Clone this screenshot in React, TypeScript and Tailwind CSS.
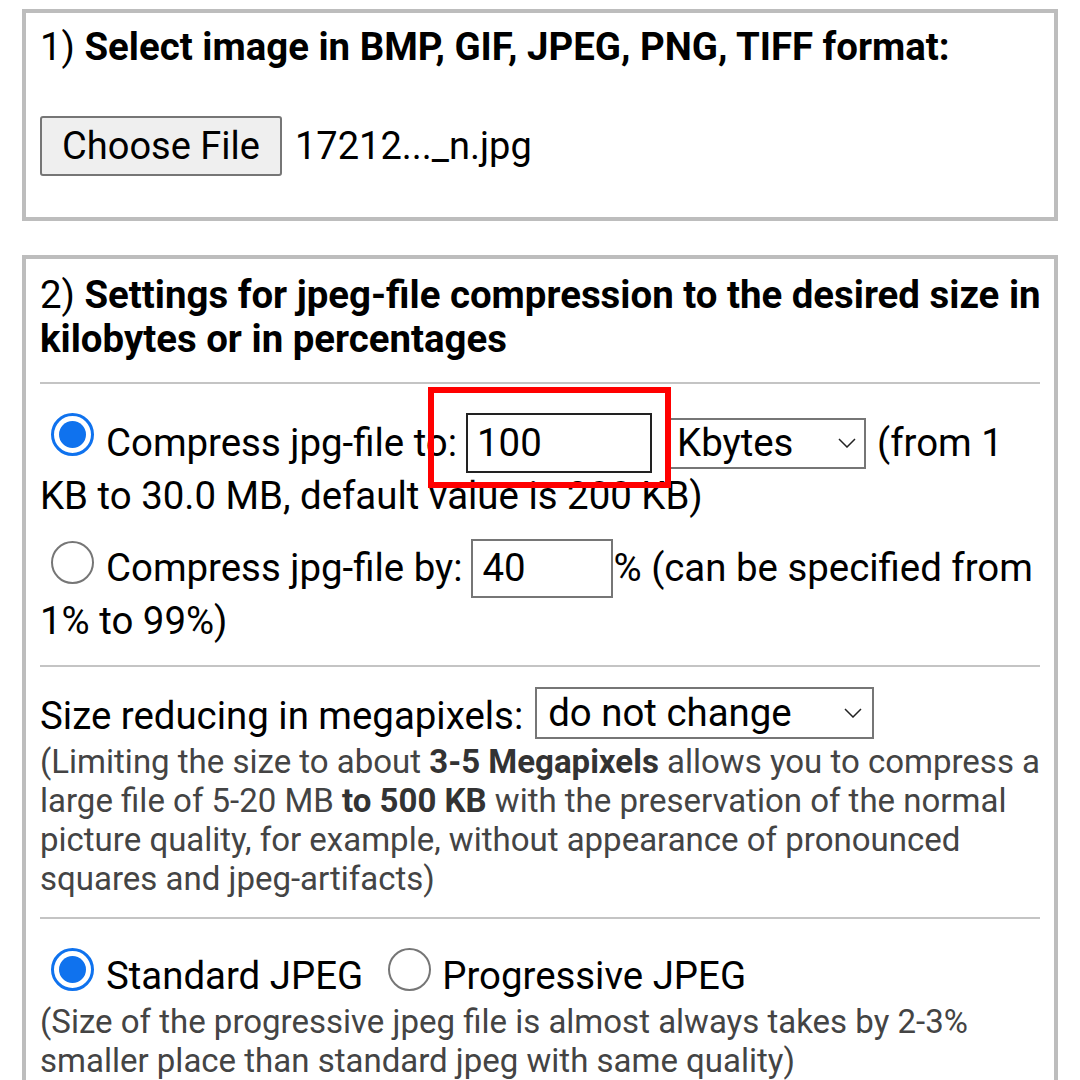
import React from "react";

function Radio({ checked }: { checked?: boolean }) {
    if (checked) {
        return (
            <span className="flex h-[43px] w-[43px] shrink-0 items-center justify-center rounded-full border-[3px] border-[#0f72ee] bg-white">
                <span className="block h-[27px] w-[27px] rounded-full bg-[#0f72ee]" />
            </span>
        );
    }
    return <span className="block h-[43px] w-[43px] shrink-0 rounded-full border-2 border-[#767676] bg-white" />;
}

function Chevron() {
    return (
        <svg width="18" height="10" viewBox="0 0 18 10" fill="none" className="shrink-0">
            <path d="M1 1l8 8 8-8" stroke="#222" strokeWidth="1.5" />
        </svg>
    );
}

export default function App() {
    return (
        <div
            className="h-[1080px] w-[1080px] overflow-hidden bg-white text-black"
            style={{ fontFamily: "Roboto, 'Noto Sans', sans-serif" }}
        >
            {/* step 1 */}
            <div className="mx-[22px] mt-[9px] h-[212px] border-4 border-[#bdbdbd] px-[14px] pt-[12px]">
                <div className="text-[38.4px] leading-[44px]">
                    1) <b>Select image in BMP, GIF, JPEG, PNG, TIFF format:</b>
                </div>
                <div className="mt-[47px] flex h-[60px] items-center">
                    <span className="flex h-[60px] w-[242px] items-center justify-center rounded-[3px] border-2 border-[#767676] bg-[#efefef] text-[38px]">
                        Choose File
                    </span>
                    <span className="ml-[13px] text-[38px]">17212..._n.jpg</span>
                </div>
            </div>

            {/* step 2 */}
            <div className="mx-[22px] mt-[34px] border-4 border-b-0 border-[#bdbdbd] px-[14px] pt-[14px]">
                <div className="whitespace-nowrap text-[38.4px] font-bold leading-[44px]">
                    <span className="font-normal">2) </span>Settings for jpeg-file compression to the desired size in
                    <br />
                    kilobytes or in percentages
                </div>

                <div className="mt-[21px] h-[2px] bg-[#c4c4c4]" />

                <div className="relative mt-[29px] whitespace-nowrap text-[38.4px]">
                    <div className="flex h-[60px] items-center">
                        <span className="mb-[18px] ml-[11px] mr-[12px]">
                            <Radio checked />
                        </span>
                        <span>Compress jpg-file to:</span>
                        <span className="ml-[9px] flex h-[60px] w-[186px] items-center border-2 border-[#222] px-[9px]">100</span>
                        <span className="ml-[15px] flex h-[51px] w-[199px] items-center justify-between border-2 border-[#767676] pl-[8px] pr-[8px]">
                            Kbytes
                            <Chevron />
                        </span>
                        <span className="ml-[11px]">(from 1</span>
                    </div>
                    <div className="h-[46px] leading-[46px]">KB to 30.0 MB, default value is 200 KB)</div>

                    <div className="mt-[19px] flex h-[60px] items-center">
                        <span className="mb-[12px] ml-[11px] mr-[12px]">
                            <Radio />
                        </span>
                        <span>Compress jpg-file by:</span>
                        <span className="ml-[9px] flex h-[59px] w-[142px] items-center border-2 border-[#767676] px-[9px]">40</span>
                        <span>% (can be specified from</span>
                    </div>
                    <div className="h-[46px] leading-[46px]">1% to 99%)</div>

                    {/* red highlight */}
                    <div className="absolute left-[388px] top-[-26px] h-[101px] w-[243px] border-[6px] border-[#ff0000]" />
                </div>

                <div className="mt-[21px] h-[2px] bg-[#c4c4c4]" />

                <div className="mt-[20px] flex h-[52px] items-baseline whitespace-nowrap text-[38.4px]">
                    <span>Size reducing in megapixels:</span>
                    <span className="ml-[12px] flex h-[52px] w-[339px] items-center justify-between self-center border-2 border-[#767676] pl-[11px] pr-[10px]">
                        do not change
                        <Chevron />
                    </span>
                </div>
                <div className="mt-[3px] whitespace-nowrap text-[33px] leading-[39px] text-[#444]">
                    (Limiting the size to about <b className="text-[#333]">3-5 Megapixels</b> allows you to compress a
                    <br />
                    large file of 5-20 MB <b className="text-[#333]">to 500 KB</b> with the preservation of the normal
                    <br />
                    picture quality, for example, without appearance of pronounced
                    <br />
                    squares and jpeg-artifacts)
                </div>

                <div className="mt-[19px] h-[2px] bg-[#c4c4c4]" />

                <div className="mt-[31px] flex h-[52px] items-center whitespace-nowrap text-[38.4px]">
                    <span className="mb-[14px] ml-[11px] mr-[12px]">
                        <Radio checked />
                    </span>
                    <span>Standard JPEG</span>
                    <span className="mb-[14px] ml-[25px] mr-[11px]">
                        <Radio />
                    </span>
                    <span>Progressive JPEG</span>
                </div>
                <div className="whitespace-nowrap text-[33px] leading-[39px] text-[#444]">
                    (Size of the progressive jpeg file is almost always takes by 2-3%
                    <br />
                    smaller place than standard jpeg with same quality)
                </div>
            </div>
        </div>
    );
}
